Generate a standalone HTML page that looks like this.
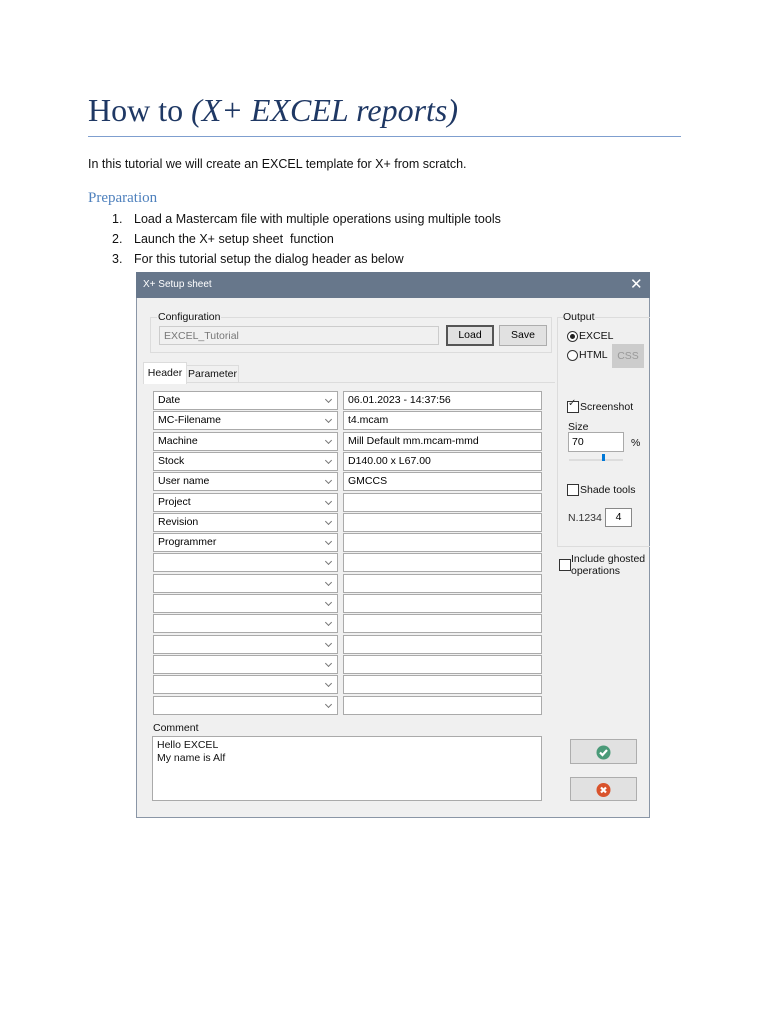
<!DOCTYPE html>
<html><head><style>
body{margin:0;width:768px;height:1024px;background:#fff;position:relative;overflow:hidden;font-family:"Liberation Sans",sans-serif}
.a{position:absolute}
.t{font-size:12.5px;color:#111}
.d{font-size:10.5px;color:#111}
.cb{position:absolute;left:153px;width:179px;height:17px;border:1px solid #aaa;background:#fff;font-size:10.5px;line-height:17px;padding-left:4px;box-sizing:content-box}
.cb:after{content:"";position:absolute;right:6px;top:5px;width:4px;height:4px;border-right:1px solid #777;border-bottom:1px solid #777;transform:rotate(45deg)}
.tf{position:absolute;left:343px;width:193px;height:17px;border:1px solid #aaa;background:#fff;font-size:10.5px;line-height:17px;padding-left:4px}
.btn{position:absolute;background:#e1e1e1;border:1px solid #adadad;font-size:10.5px;text-align:center;box-sizing:border-box}
.chk{position:absolute;width:10px;height:10px;border:1px solid #333;background:#fff}
</style></head><body>
<div class="a" style="left:88px;top:92px;font-family:'Liberation Serif',serif;font-size:32px;color:#1f3864">How to <i>(X+ EXCEL reports)</i></div>
<div class="a" style="left:88px;top:136px;width:593px;height:1px;background:#7f9fcf"></div>
<div class="a t" style="left:88px;top:157px">In this tutorial we will create an EXCEL template for X+ from scratch.</div>
<div class="a" style="left:88px;top:190px;font-family:'Liberation Serif',serif;font-size:15px;color:#4f81bd">Preparation</div>
<div class="a t" style="left:112px;top:212px">1.</div><div class="a t" style="left:134px;top:212px">Load a Mastercam file with multiple operations using multiple tools</div>
<div class="a t" style="left:112px;top:232px">2.</div><div class="a t" style="left:134px;top:232px">Launch the X+ setup sheet &nbsp;function</div>
<div class="a t" style="left:112px;top:252px">3.</div><div class="a t" style="left:134px;top:252px">For this tutorial setup the dialog header as below</div>

<div class="a" style="left:136px;top:272px;width:512px;height:544px;background:#f0f0f0;border:1px solid #8a96a6"></div>
<div class="a" style="left:136px;top:272px;width:514px;height:26px;background:#67778b"></div>
<div class="a" style="left:143px;top:279px;font-size:10px;color:#fff">X+ Setup sheet</div>
<div class="a" style="left:630px;top:275px;font-size:15px;color:#fff">✕</div>

<div class="a" style="left:150px;top:317px;width:400px;height:34px;border:1px solid #dcdcdc"></div>
<div class="a d" style="left:157px;top:311px;background:#f0f0f0;padding:0 1px">Configuration</div>
<div class="a" style="left:159px;top:326px;width:280px;height:19px;border:1px solid #ccc;background:#f0f0f0;font-size:10.5px;color:#777;line-height:18px;padding-left:4px;box-sizing:border-box">EXCEL_Tutorial</div>
<div class="btn" style="left:446px;top:325px;width:48px;height:21px;border:2px solid #555;line-height:17px">Load</div>
<div class="btn" style="left:499px;top:325px;width:48px;height:21px;line-height:19px">Save</div>

<div class="a" style="left:557px;top:317px;width:92px;height:228px;border-left:1px solid #dcdcdc;border-top:1px solid #dcdcdc;border-bottom:1px solid #dcdcdc"></div>
<div class="a d" style="left:563px;top:311px;background:#f0f0f0">Output</div>
<div class="a" style="left:567px;top:331px;width:9px;height:9px;border:1px solid #333;border-radius:50%;background:#fff"></div>
<div class="a" style="left:570px;top:334px;width:5px;height:5px;border-radius:50%;background:#222"></div>
<div class="a d" style="left:579px;top:330px">EXCEL</div>
<div class="a" style="left:567px;top:350px;width:9px;height:9px;border:1px solid #333;border-radius:50%;background:#fff"></div>
<div class="a d" style="left:579px;top:349px">HTML</div>
<div class="a" style="left:612px;top:344px;width:30px;height:22px;background:#ccc;border:1px solid #ccc;color:#999;font-size:10.5px;text-align:center;line-height:22px">CSS</div>
<div class="chk" style="left:567px;top:401px"></div><div class="a" style="left:568px;top:398px;font-size:10px;color:#333">✓</div>
<div class="a d" style="left:580px;top:401px">Screenshot</div>
<div class="a d" style="left:568px;top:421px">Size</div>
<div class="a" style="left:568px;top:432px;width:56px;height:20px;background:#fff;border:1px solid #aaa;box-sizing:border-box;font-size:10.5px;padding:3px">70</div>
<div class="a d" style="left:631px;top:437px">%</div>
<div class="a" style="left:569px;top:459px;width:54px;height:2px;background:#ddd"></div>
<div class="a" style="left:602px;top:454px;width:3px;height:7px;background:#0078d7"></div>
<div class="chk" style="left:567px;top:484px"></div>
<div class="a d" style="left:580px;top:484px">Shade tools</div>
<div class="a d" style="left:568px;top:512px;color:#333">N.1234</div>
<div class="a" style="left:605px;top:508px;width:27px;height:19px;background:#fff;border:1px solid #888;box-sizing:border-box;font-size:10.5px;text-align:center;line-height:17px">4</div>
<div class="chk" style="left:559px;top:559px"></div>
<div class="a d" style="left:571px;top:553px;line-height:12px">Include ghosted<br>operations</div>

<div class="a" style="left:144px;top:382px;width:411px;height:1px;background:#dcdcdc"></div>
<div class="a d" style="left:143px;top:362px;width:42px;height:21px;background:#fff;border:1px solid #dcdcdc;border-bottom:none;text-align:center;line-height:20px">Header</div>
<div class="a d" style="left:186px;top:365px;width:51px;height:17px;border:1px solid #dcdcdc;border-bottom:none;text-align:center;line-height:17px">Parameter</div>

<div class="cb" style="top:391px">Date</div><div class="tf" style="top:391px">06.01.2023 - 14:37:56</div>
<div class="cb" style="top:411px">MC-Filename</div><div class="tf" style="top:411px">t4.mcam</div>
<div class="cb" style="top:432px">Machine</div><div class="tf" style="top:432px">Mill Default mm.mcam-mmd</div>
<div class="cb" style="top:452px">Stock</div><div class="tf" style="top:452px">D140.00 x L67.00</div>
<div class="cb" style="top:472px">User name</div><div class="tf" style="top:472px">GMCCS</div>
<div class="cb" style="top:493px">Project</div><div class="tf" style="top:493px"></div>
<div class="cb" style="top:513px">Revision</div><div class="tf" style="top:513px"></div>
<div class="cb" style="top:533px">Programmer</div><div class="tf" style="top:533px"></div>
<div class="cb" style="top:553px"></div><div class="tf" style="top:553px"></div>
<div class="cb" style="top:574px"></div><div class="tf" style="top:574px"></div>
<div class="cb" style="top:594px"></div><div class="tf" style="top:594px"></div>
<div class="cb" style="top:614px"></div><div class="tf" style="top:614px"></div>
<div class="cb" style="top:635px"></div><div class="tf" style="top:635px"></div>
<div class="cb" style="top:655px"></div><div class="tf" style="top:655px"></div>
<div class="cb" style="top:675px"></div><div class="tf" style="top:675px"></div>
<div class="cb" style="top:696px"></div><div class="tf" style="top:696px"></div>

<div class="a d" style="left:153px;top:722px">Comment</div>
<div class="a d" style="left:152px;top:736px;width:390px;height:65px;background:#fff;border:1px solid #aaa;box-sizing:border-box;padding:2px 4px;line-height:13px">Hello EXCEL<br>My name is Alf</div>
<div class="btn" style="left:570px;top:739px;width:67px;height:25px"><svg width="25" height="25" viewBox="0 0 25 25"><circle cx="12.5" cy="12.5" r="7" fill="#4a9a78"/><path d="M9 12.5l2.5 2.5 4.5-5" stroke="#fff" stroke-width="2.2" fill="none"/></svg></div>
<div class="btn" style="left:570px;top:777px;width:67px;height:24px"><svg width="25" height="24" viewBox="0 0 25 24"><circle cx="12.5" cy="12" r="7" fill="#d9532c"/><path d="M10 9.5l5 5M15 9.5l-5 5" stroke="#fff" stroke-width="2.2"/></svg></div>
</body></html>
